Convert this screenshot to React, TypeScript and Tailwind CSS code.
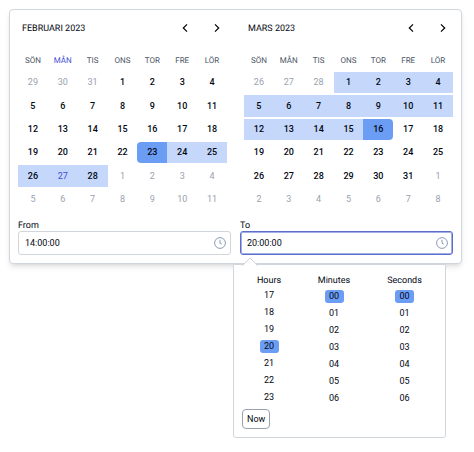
import React from "react";
import { clsx } from "clsx";

const WEEKDAYS = ["SÖN", "MÅN", "TIS", "ONS", "TOR", "FRE", "LÖR"];

type MonthProps = {
  title: string;
  /** Day shown in the first cell and the length of the previous month */
  firstCell: number;
  previousLength: number;
  length: number;
  rangeStart: number;
  rangeEnd: number;
  startDay?: number;
  endDay?: number;
  today?: number;
  todayColumn?: number;
  className?: string;
};

function Chevron({ direction }: { direction: "left" | "right" }) {
  return (
    <button
      type="button"
      aria-label={direction === "left" ? "Föregående månad" : "Nästa månad"}
      className="flex h-6 w-8 items-center justify-center text-black"
    >
      <svg viewBox="0 0 8 10" className="h-[10px] w-2" fill="none" stroke="currentColor" strokeWidth="1.2">
        <path d={direction === "left" ? "M6 1.3 2.3 5 6 8.7" : "M2 1.3 5.7 5 2 8.7"} />
      </svg>
    </button>
  );
}

function Month(props: MonthProps) {
  const lead = props.previousLength - props.firstCell + 1;
  const cells = Array.from({ length: 42 }, (_, i) => {
    const n = i - lead + 1;
    if (n < 1) return { day: props.firstCell + i, current: false };
    if (n > props.length) return { day: n - props.length, current: false };
    return { day: n, current: true };
  });

  return (
    <section className={clsx("min-w-0", props.className)}>
      <header className="-mr-[6px] flex h-9 items-center justify-between pl-1">
        <h2 className="pt-[3px] text-[9px] font-normal whitespace-nowrap">{props.title}</h2>
        <div className="flex">
          <Chevron direction="left" />
          <Chevron direction="right" />
        </div>
      </header>
      <div className="mt-1 grid h-[22px] grid-cols-7 items-center text-center text-[8px] text-gray-600">
        {WEEKDAYS.map((name, i) => (
          <span key={name} className={i === props.todayColumn ? "text-[#3f51d8]" : ""}>
            {name}
          </span>
        ))}
      </div>
      <div className="grid h-[138px] grid-cols-7 grid-rows-6 gap-y-[2px] text-[9px]">
        {cells.map(({ day, current }, i) => {
          const inRange = current && day >= props.rangeStart && day <= props.rangeEnd;
          const isStart = current && day === props.startDay;
          const isEnd = current && day === props.endDay;
          return (
            <button
              key={i}
              type="button"
              className={clsx(
                "flex items-center justify-center pt-px",
                !current && "text-gray-400",
                current && (day === props.today ? "text-[#3f51d8]" : "font-medium text-gray-950"),
                inRange && !isStart && !isEnd && "bg-[#c5d8fb]",
                (isStart || isEnd) && "bg-[#6c9df5]",
                isStart && "rounded-l",
                isEnd && "rounded-r",
              )}
            >
              {day}
            </button>
          );
        })}
      </div>
    </section>
  );
}

function TimeField({
  id,
  label,
  value,
  active,
  children,
}: {
  id: string;
  label: string;
  value: string;
  active?: boolean;
  children?: React.ReactNode;
}) {
  return (
    <div className="relative min-w-0">
      <label htmlFor={id} className="block text-[9px] leading-[10px]">
        {label}
      </label>
      <div
        className={clsx(
          "flex h-6 items-center rounded-[3px] border bg-white pr-1",
          active ? "border-[#5c6ecb] ring-1 ring-[#a3aee6] ring-inset" : "border-gray-300",
        )}
      >
        <input
          id={id}
          defaultValue={value}
          className="h-full min-w-0 flex-1 bg-transparent pl-[6px] text-[9px] outline-none"
        />
        <svg viewBox="0 0 12 12" className="size-3 text-[#8d9bb8]" fill="none" stroke="currentColor" strokeWidth="1">
          <circle cx="6" cy="6" r="5.4" />
          <path d="M6 2.8V6.2L7.8 7" />
        </svg>
      </div>
      {children}
    </div>
  );
}

function TimeColumn({
  title,
  from,
  selected,
  className,
}: {
  title: string;
  from: number;
  selected: number;
  className?: string;
}) {
  return (
    <div className="flex flex-col items-center">
      <h3 className="text-[9px] leading-3">{title}</h3>
      <div className={clsx("h-[115px] overflow-hidden", className)}>
        {Array.from({ length: 7 }, (_, i) => from + i).map((n) => (
          <button key={n} type="button" className="flex h-[17px] w-[19px] items-center">
            <span
              className={clsx(
                "h-[13px] w-full rounded-[3px] text-[9px] leading-[13px]",
                n === selected && "bg-[#6c9df5]",
              )}
            >
              {String(n).padStart(2, "0")}
            </span>
          </button>
        ))}
      </div>
    </div>
  );
}

function TimePopover() {
  return (
    <div className="absolute top-[43px] -left-[7px] z-10 w-[213px] rounded-[3px] rounded-t-none border border-gray-300 bg-white px-2 pt-[10px] pb-2">
      <svg viewBox="0 0 16 9" className="absolute -top-2 left-2 h-[9px] w-4" aria-hidden="true">
        <path d="M0 9 8 1l8 8Z" fill="#fff" />
        <path d="M0 8.5h.5L8 1l7.5 7.5h.5" fill="none" stroke="#d1d5db" />
      </svg>
      <div className="grid grid-cols-[54fr_76fr_65fr]">
        <TimeColumn title="Hours" from={17} selected={20} />
        <TimeColumn title="Minutes" from={0} selected={0} className="pt-px" />
        <TimeColumn title="Seconds" from={0} selected={0} className="pt-px" />
      </div>
      <button type="button" className="mt-[7px] h-5 rounded border border-gray-400 px-1 pt-px text-[9px]">
        Now
      </button>
    </div>
  );
}

export default function App() {
  return (
    <main className="min-h-screen bg-white pt-[9px] pr-3 pb-3 pl-[9px] font-['Roboto','Inter',sans-serif] text-gray-950 [text-rendering:geometricPrecision]">
      <div className="rounded border border-gray-300 bg-white px-2 pb-2 shadow-md">
        <div className="grid grid-cols-2 gap-x-[9px]">
          <Month
            title="FEBRUARI 2023"
            firstCell={29}
            previousLength={31}
            length={28}
            rangeStart={23}
            rangeEnd={28}
            startDay={23}
            today={27}
            todayColumn={1}
            className="pr-1"
          />
          <Month
            title="MARS 2023"
            firstCell={26}
            previousLength={28}
            length={31}
            rangeStart={1}
            rangeEnd={16}
            endDay={16}
            className="pl-1"
          />
        </div>
        <div className="mt-[11px] grid grid-cols-2 gap-x-[9px]">
          <TimeField id="from" label="From" value="14:00:00" />
          <TimeField id="to" label="To" value="20:00:00" active>
            <TimePopover />
          </TimeField>
        </div>
      </div>
    </main>
  );
}
